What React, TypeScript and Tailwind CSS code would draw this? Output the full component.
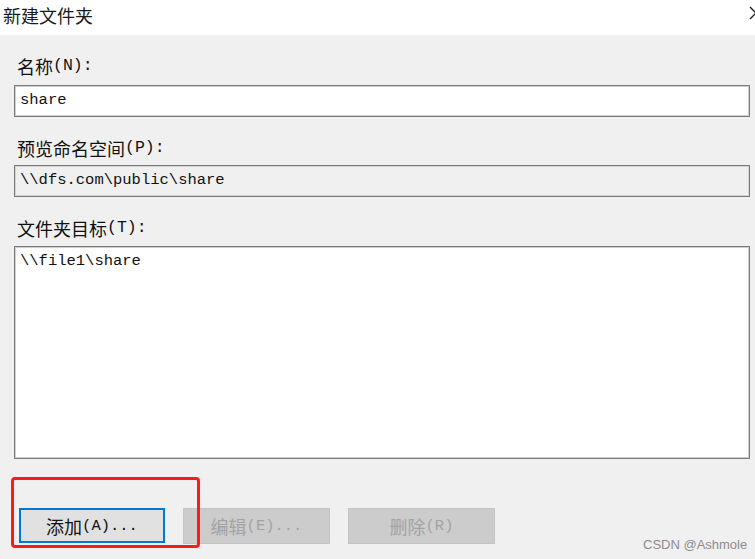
import React from "react";

const CJK = '"Noto Sans CJK SC", "Noto Sans", sans-serif';
const MONO = '"Liberation Mono", "Noto Sans CJK SC", monospace';

function Label({ text, hint }: { text: string; hint: string }) {
  return (
    <div className="ml-[3px] h-[20px] leading-[20px] text-[18px] text-[#111] flex items-center whitespace-nowrap">
      <span style={{ fontFamily: CJK }}>{text}</span>
      <span className="text-[16.5px]" style={{ fontFamily: MONO }}>
        {hint}
      </span>
    </div>
  );
}

function Btn({
  cjk,
  hint,
  primary,
}: {
  cjk: string;
  hint: string;
  primary?: boolean;
}) {
  return (
    <div
      className={
        primary
          ? "w-[146px] h-[35px] border-2 border-[#0078d7] bg-[#e1e1e1] text-[#111] flex items-center justify-center whitespace-nowrap"
          : "w-[147px] h-[36px] border border-[#c4c4c4] bg-[#cccccc] text-[#a3a3a3] flex items-center justify-center whitespace-nowrap"
      }
    >
      <span className="text-[18px] leading-[20px]" style={{ fontFamily: CJK }}>
        {cjk}
      </span>
      <span className="text-[15.5px] leading-[20px]" style={{ fontFamily: MONO }}>
        {hint}
      </span>
    </div>
  );
}

export default function App() {
  return (
    <div className="relative w-[755px] h-[559px] overflow-hidden bg-[#f0f0f0]">
      {/* title bar */}
      <div className="h-[35px] bg-white flex items-center justify-between pl-[3px]">
        <span
          className="text-[18px] leading-[22px] text-[#1a1a1a] -mt-[5px]"
          style={{ fontFamily: CJK }}
        >
          新建文件夹
        </span>
        <svg
          width="14"
          height="14"
          viewBox="0 0 14 14"
          className="mr-[-8px] -mt-[10px]"
        >
          <path d="M1 1 L13 13 M13 1 L1 13" stroke="#222" strokeWidth="1.4" />
        </svg>
      </div>

      {/* form */}
      <div className="flex flex-col pl-[14px] pr-[5px]">
        <div className="mt-[21px]">
          <Label text="名称" hint="(N):" />
        </div>
        <div className="mt-[9px] h-[32px] bg-white border border-[#7a7a7a] shadow-[inset_0_0_0_1px_#cfcfcf] flex items-center pl-[5px]">
          <span className="text-[15.5px] text-[#111]" style={{ fontFamily: MONO }}>
            share
          </span>
        </div>

        <div className="mt-[21px]">
          <Label text="预览命名空间" hint="(P):" />
        </div>
        <div className="mt-[7px] h-[32px] bg-[#f0f0f0] border border-[#7a7a7a] shadow-[inset_0_0_0_1px_#d4d4d4] flex items-center pl-[5px]">
          <span className="text-[15.5px] text-[#111]" style={{ fontFamily: MONO }}>
            {"\\\\dfs.com\\public\\share"}
          </span>
        </div>

        <div className="mt-[21px]">
          <Label text="文件夹目标" hint="(T):" />
        </div>
        <div className="mt-[8px] h-[213px] bg-white border border-[#7a7a7a] shadow-[inset_0_0_0_1px_#cfcfcf] pl-[5px] pt-[4px]">
          <div
            className="text-[15.5px] leading-[20px] text-[#111]"
            style={{ fontFamily: MONO }}
          >
            {"\\\\file1\\share"}
          </div>
        </div>

        {/* action buttons */}
        <div className="mt-[49px] ml-[5px] flex items-start gap-[18px]">
          <Btn cjk="添加" hint="(A)..." primary />
          <Btn cjk="编辑" hint="(E)..." />
          <Btn cjk="删除" hint="(R)" />
        </div>
      </div>

      {/* highlight mark around the add button */}
      <div className="absolute left-[11px] top-[477px] w-[189px] h-[71px] border-[3px] border-[#ff1a1a] rounded-[4px]" />

      {/* watermark */}
      <div
        className="absolute left-[643px] top-[537px] text-[13px] leading-[16px] text-[#8c8c8c]"
        style={{ fontFamily: '"Liberation Sans", Arial, sans-serif' }}
      >
        CSDN @Ashmole
      </div>
    </div>
  );
}
